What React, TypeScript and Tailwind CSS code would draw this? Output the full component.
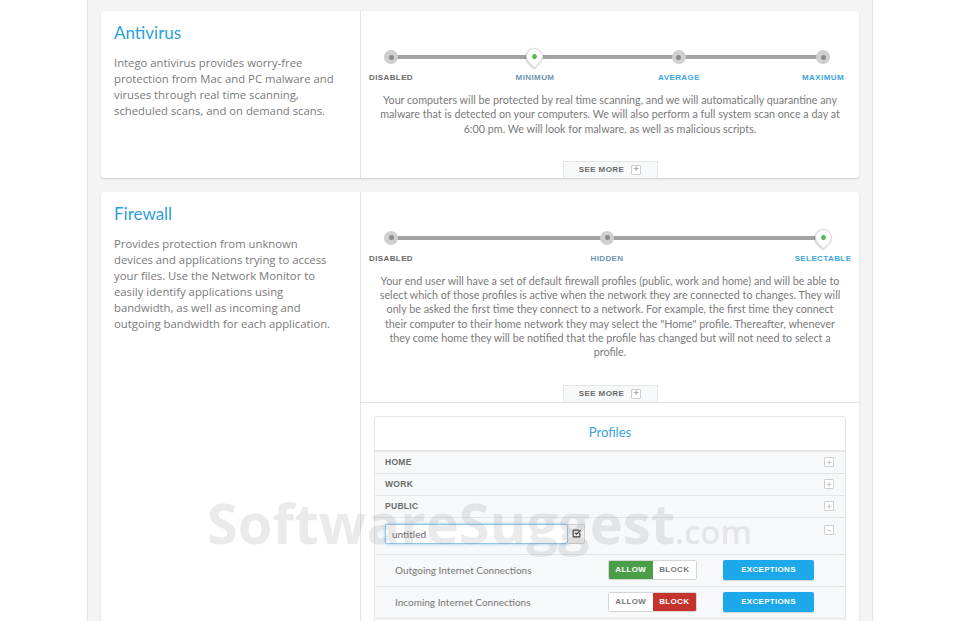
import { SquareCheckBig } from "lucide-react";

type Stop = { label: string; tone: "dark" | "muted" | "blue" };

const toneClass = {
  dark: "text-[#6b6b6b]",
  muted: "text-[#6f93ae]",
  blue: "text-[#3aa5de]",
};

const labelFont = { fontFamily: '"Liberation Sans", Arial, sans-serif' };

function PlusBox({ minus = false }: { minus?: boolean }) {
  return (
    <span className="flex h-[10px] w-[10px] items-center justify-center rounded-[1px] border border-[#cfcfcf] bg-white text-[9px] leading-none text-[#aaa]">
      {minus ? "–" : "+"}
    </span>
  );
}

function Slider({ stops, active }: { stops: Stop[]; active: number }) {
  const n = stops.length - 1;
  return (
    <div className="relative mx-[10px] mt-[38px] h-[32px]">
      <div className="absolute left-[20px] right-[26px] top-[6px] h-[4px] rounded-full bg-[#a3a3a3]" />
      <div className="absolute left-[20px] right-[26px] top-0 h-full">
        {stops.map((s, i) => (
          <div
            key={s.label}
            className="absolute top-0 h-full"
            style={{ left: `${(i / n) * 100}%` }}
          >
            {i === active ? (
              <div className="absolute left-[-8.5px] top-[-1px] flex h-[17px] w-[17px] rotate-45 items-center justify-center rounded-full rounded-br-[2px] border border-[#dcdcdc] bg-white shadow-[0_1px_2px_rgba(0,0,0,0.2)]">
                <span className="h-[5px] w-[5px] rounded-full bg-[#5cb85c]" />
              </div>
            ) : (
              <div className="absolute left-[-7px] top-[1px] flex h-[14px] w-[14px] items-center justify-center rounded-full bg-[#cfcfcf]">
                <span className="h-[5px] w-[5px] rounded-full bg-[#8a8a8a]" />
              </div>
            )}
            <span
              className={`absolute top-[24px] -translate-x-1/2 whitespace-nowrap text-[8px] font-bold leading-[10px] tracking-[0.4px] ${toneClass[s.tone]}`}
              style={labelFont}
            >
              {s.label}
            </span>
          </div>
        ))}
      </div>
    </div>
  );
}

function SeeMore() {
  return (
    <div className="mt-[25px] flex justify-center">
      <button
        className="flex h-[17px] w-[95px] items-center justify-center gap-[7px] border-x border-t border-[#e6e6e6] bg-[#f6f8f9] text-[8px] font-bold tracking-[0.4px] text-[#6b6b6b]"
        style={labelFont}
      >
        SEE MORE
        <PlusBox />
      </button>
    </div>
  );
}

function Card({
  title,
  intro,
  children,
}: {
  title: string;
  intro: string;
  children: React.ReactNode;
}) {
  return (
    <div className="flex shrink-0 rounded-[3px] bg-white shadow-[0_1px_2px_rgba(0,0,0,0.15)]">
      <div className="w-[260px] shrink-0 border-r border-[#e3e3e3] pl-[13px] pr-[24px] pt-[11px]">
        <h2 className="text-[17px] font-normal leading-[22px] text-[#2d9edb]">{title}</h2>
        <p
          className="mt-[11px] text-[11.3px] leading-[16px] text-[#7a7a7a]"
          style={{ fontFamily: '"Open Sans", sans-serif' }}
        >
          {intro}
        </p>
      </div>
      <div className="flex min-w-0 flex-1 flex-col">{children}</div>
    </div>
  );
}

function Desc({ text }: { text: string }) {
  return (
    <p className="mt-[12px] px-[14px] text-center text-[10.75px] leading-[14.3px] text-[#7a7a7a]">
      {text}
    </p>
  );
}

function ToggleGroup({ allow }: { allow: boolean }) {
  return (
    <div
      className="flex h-[20px] w-[89px] overflow-hidden rounded-[2px] border border-[#d6d6d6] text-[8px] font-bold tracking-[0.3px]"
      style={labelFont}
    >
      <span className={`flex flex-1 items-center justify-center ${allow ? "bg-[#4a9e48] text-white" : "bg-white text-[#777]"}`}>
        ALLOW
      </span>
      <span className={`flex flex-1 items-center justify-center ${allow ? "bg-white text-[#777]" : "bg-[#c4342d] text-white"}`}>
        BLOCK
      </span>
    </div>
  );
}

function ConnectionRow({ label, allow }: { label: string; allow: boolean }) {
  return (
    <div className="flex h-[32px] items-center border-b border-[#e3e6e8] bg-[#f6f8f9] pl-[20px] pr-[31px]">
      <span className="flex-1 text-[10px] text-[#777]">{label}</span>
      <ToggleGroup allow={allow} />
      <button
        className="ml-[26px] h-[20px] w-[91px] rounded-[2px] bg-[#1ca8ea] text-[8px] font-bold tracking-[0.3px] text-white shadow-[0_1px_1px_rgba(0,0,0,0.15)]"
        style={labelFont}
      >
        EXCEPTIONS
      </button>
    </div>
  );
}

function ProfileRow({ name }: { name: string }) {
  return (
    <div className="flex h-[22px] items-center justify-between border-b border-[#e3e6e8] bg-[#f6f8f9] pl-[10px] pr-[11px]">
      <span className="text-[8.5px] font-bold tracking-[0.3px] text-[#6b6b6b]" style={labelFont}>
        {name}
      </span>
      <PlusBox />
    </div>
  );
}

export default function App() {
  return (
    <div
      className="flex h-[621px] justify-center overflow-hidden bg-white"
      style={{ fontFamily: 'Lato, "Open Sans", sans-serif' }}
    >
      <div className="relative flex w-[786px] flex-col gap-[14px] border-x border-[#e2e2e2] bg-[#f4f4f4] px-[13px] pt-[11px]">
        <Card
          title="Antivirus"
          intro="Intego antivirus provides worry-free protection from Mac and PC malware and viruses through real time scanning, scheduled scans, and on demand scans."
        >
          <Slider
            active={1}
            stops={[
              { label: "DISABLED", tone: "dark" },
              { label: "MINIMUM", tone: "muted" },
              { label: "AVERAGE", tone: "blue" },
              { label: "MAXIMUM", tone: "blue" },
            ]}
          />
          <Desc text="Your computers will be protected by real time scanning, and we will automatically quarantine any malware that is detected on your computers. We will also perform a full system scan once a day at 6:00 pm. We will look for malware, as well as malicious scripts." />
          <SeeMore />
        </Card>

        <Card
          title="Firewall"
          intro="Provides protection from unknown devices and applications trying to access your files. Use the Network Monitor to easily identify applications using bandwidth, as well as incoming and outgoing bandwidth for each application."
        >
          <div className="border-b border-[#e3e3e3]">
            <Slider
              active={2}
              stops={[
                { label: "DISABLED", tone: "dark" },
                { label: "HIDDEN", tone: "muted" },
                { label: "SELECTABLE", tone: "blue" },
              ]}
            />
            <Desc text={'Your end user will have a set of default firewall profiles (public, work and home) and will be able to select which of those profiles is active when the network they are connected to changes. They will only be asked the first time they connect to a network. For example, the first time they connect their computer to their home network they may select the "Home" profile. Thereafter, whenever they come home they will be notified that the profile has changed but will not need to select a profile.'} />
            <SeeMore />
          </div>

          <div className="mx-[13px] mt-[13px] rounded-[3px] border border-[#e6e6e6] shadow-[0_1px_2px_rgba(0,0,0,0.06)]">
            <div className="flex h-[35px] items-center justify-center border-b-2 border-[#e6e6e6] text-[13px] text-[#3aa5de]">
              Profiles
            </div>
            <ProfileRow name="HOME" />
            <ProfileRow name="WORK" />
            <ProfileRow name="PUBLIC" />
            <div className="flex h-[37px] items-start justify-between border-b border-[#e3e6e8] bg-[#f6f8f9] pl-[10px] pr-[11px] pt-[6px]">
              <div className="flex">
                <input
                  readOnly
                  value="untitled"
                  className="h-[20px] w-[183px] rounded-[2px] border border-[#8cc4ec] bg-white px-[6px] text-[10px] text-[#666] shadow-[0_0_3px_rgba(60,160,230,0.6)] outline-none"
                />
                <button className="flex h-[20px] w-[17px] items-center justify-center rounded-r-[2px] border border-l-0 border-[#cfcfcf] bg-[#eeeeee] text-[#333]">
                  <SquareCheckBig size={9} strokeWidth={3} />
                </button>
              </div>
              <div className="pt-[1px]">
                <PlusBox minus />
              </div>
            </div>
            <ConnectionRow label="Outgoing Internet Connections" allow />
            <ConnectionRow label="Incoming Internet Connections" allow={false} />
            <div className="h-[20px] bg-[#f6f8f9]" />
          </div>
        </Card>

        <div
          className="pointer-events-none absolute left-[119px] top-[494px] flex items-baseline whitespace-nowrap text-[rgba(150,150,150,0.2)]"
          style={{ fontFamily: '"Open Sans", sans-serif' }}
        >
          <span className="text-[56px] font-bold leading-none">SoftwareSuggest</span>
          <span className="text-[33px] font-semibold leading-none">.com</span>
        </div>
      </div>
    </div>
  );
}
